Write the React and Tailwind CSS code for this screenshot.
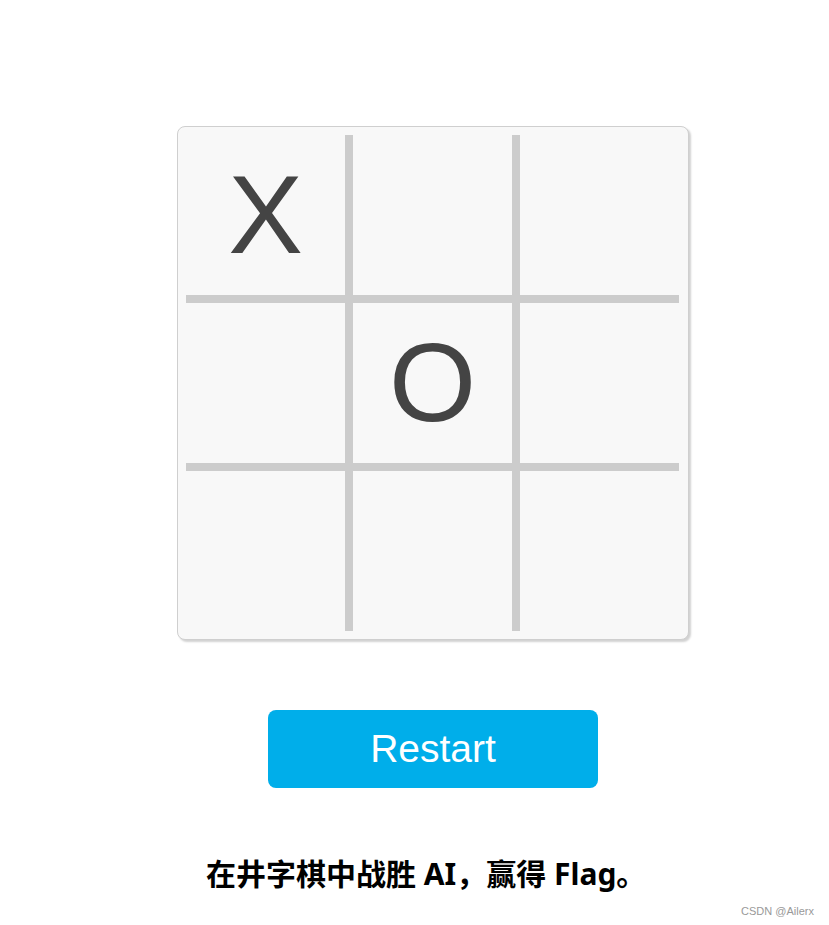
export default function App() {
  const cells = ["X", "", "", "", "O", "", "", "", ""];
  return (
    <div className="relative w-[829px] h-[925px] bg-white overflow-hidden">
      <div className="flex flex-col pt-[126px]">
        <div className="ml-[177px] w-[512px] h-[514px] border border-[#cfcfcf] rounded-[8px] bg-[#f8f8f8] p-[8px] shadow-[2px_2px_2px_rgba(0,0,0,0.18)]">
          <div className="grid grid-cols-[159px_159px_159px] grid-rows-[160px_160px_160px] gap-[8px] bg-[#cccccc] w-[493px] h-[496px]">
            {cells.map((c, i) => (
              <div
                key={i}
                className="bg-[#f8f8f8] flex items-center justify-center text-[112px] leading-none text-[#444444] font-['Liberation_Sans',Arial,sans-serif]"
              >
                {c}
              </div>
            ))}
          </div>
        </div>
        <button className="ml-[268px] mt-[70px] w-[330px] h-[78px] rounded-[8px] bg-[#00aeea] text-white text-[39px] font-['Liberation_Sans',Arial,sans-serif] flex items-center justify-center">
          Restart
        </button>
        <div className="mt-[64px] ml-[206px] text-[30px] leading-[44px] font-bold text-black font-['Noto_Sans','Noto_Sans_CJK_SC',sans-serif] whitespace-nowrap">
          在井字棋中战胜 AI，赢得 Flag。
        </div>
      </div>
      <div className="absolute right-[15px] top-[903px] text-[11px] text-[#999999] font-['Liberation_Sans',Arial,sans-serif]">
        CSDN @Ailerx
      </div>
    </div>
  );
}
